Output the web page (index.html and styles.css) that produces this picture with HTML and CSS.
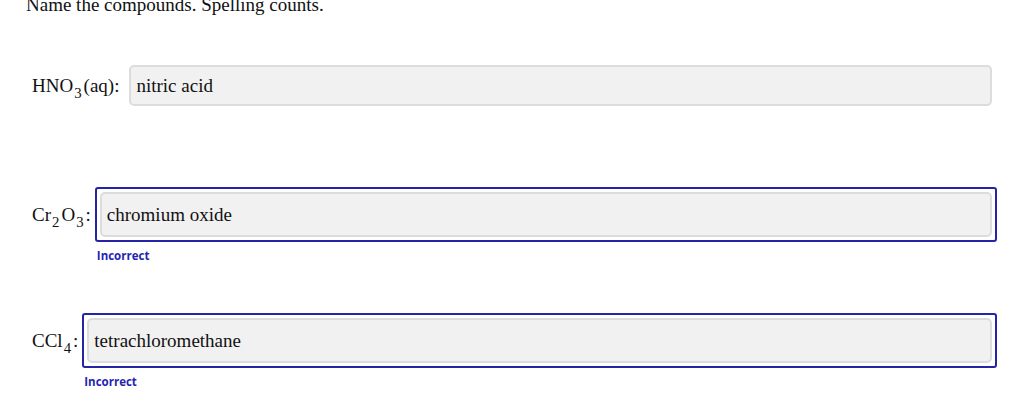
FILE: index.html
```html
<!DOCTYPE html>
<html lang="en">
<head>
	<meta charset="UTF-8">
	<title>Name the compounds</title>
	<link rel="stylesheet" href="styles.css">
</head>
<body>
	<div class="sheet">
		<p class="prompt">Name the compounds. Spelling counts.</p>

		<div class="row row-plain">
			<span class="formula">HNO<sub>3</sub>(aq):</span>
			<div class="answer">nitric acid</div>
		</div>

		<div class="row row-wrong row-second">
			<span class="formula">Cr<sub>2</sub>O<sub>3</sub>:</span>
			<div class="checked">
				<div class="frame">
					<div class="answer">chromium oxide</div>
				</div>
				<div class="feedback">Incorrect</div>
			</div>
		</div>

		<div class="row row-wrong row-third">
			<span class="formula">CCl<sub>4</sub>:</span>
			<div class="checked">
				<div class="frame">
					<div class="answer">tetrachloromethane</div>
				</div>
				<div class="feedback">Incorrect</div>
			</div>
		</div>
	</div>
</body>
</html>
```

FILE: styles.css
```css
body{
	margin: 0;
	background: #fff;
	color: #111;
	font-family: "Liberation Serif", "Times New Roman", serif;
	font-size: 19px;
}
.sheet{
	padding: 0 27px 0 32px;
}
.prompt{
	margin: -6px 0 0 -6px;
}
.row{
	display: flex;
	align-items: flex-start;
}
.formula{
	line-height: 41px;
	white-space: nowrap;
}
.formula sub{
	font-size: 0.78em;
	vertical-align: -0.4em;
	line-height: 0;
	margin: 0 2px 0 1px;
}
.row-plain{
	margin-top: 49px;
	margin-right: 5px;
}
.row-plain .formula{
	margin-right: 10px;
}
.row-second{
	margin-top: 81px;
}
.row-third{
	margin-top: 50px;
}
.row-wrong .formula{
	margin-top: 7px;
	margin-right: 4px;
}
.answer{
	flex: 1;
	height: 41px;
	box-sizing: border-box;
	line-height: 37px;
	padding-left: 5px;
	background: #f1f1f1;
	border: 2px solid #dcdcdc;
	border-radius: 5px;
}
.row-wrong .answer{
	height: 45px;
	line-height: 41px;
}
.checked{
	flex: 1;
}
.frame{
	display: flex;
	padding: 3px;
	border: 2px solid #2424a4;
	border-radius: 3px;
}
.feedback{
	margin: 6px 0 0 2px;
	font-family: "Open Sans", "Liberation Sans", sans-serif;
	font-weight: 700;
	font-size: 11.5px;
	color: #2424b0;
}
```
